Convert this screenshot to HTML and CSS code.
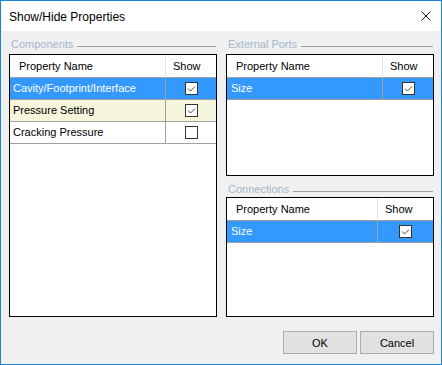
FILE: index.html
```
<!DOCTYPE html>
<html>
<head>
<meta charset="utf-8">
<link rel="stylesheet" href="styles.css">
</head>
<body>
<div class="window">
  <div class="titlebar">
    <span class="title">Show/Hide Properties</span>
    <svg class="close" width="10" height="10" viewBox="0 0 10 10"><path d="M0.5 0.5 L9.5 9.5 M9.5 0.5 L0.5 9.5" stroke="#111" stroke-width="1" fill="none"/></svg>
  </div>
  <div class="body">
    <div class="columns">
      <div class="col">
        <div class="group-label"><span>Components</span><div class="rule"></div></div>
        <div class="grid grid-components">
          <div class="row head"><div class="cell name">Property Name</div><div class="cell show">Show</div></div>
          <div class="row selected"><div class="cell name">Cavity/Footprint/Interface</div><div class="cell check"><svg width="13" height="13" viewBox="0 0 13 13"><rect x="0.5" y="0.5" width="12" height="12" fill="#fff" stroke="#333"/><path d="M3 6.5 L5.5 9 L10 4.5" stroke="#444" stroke-width="1" fill="none"/></svg></div></div>
          <div class="row current"><div class="cell name">Pressure Setting</div><div class="cell check"><svg width="13" height="13" viewBox="0 0 13 13"><rect x="0.5" y="0.5" width="12" height="12" fill="#fff" stroke="#333"/><path d="M3 6.5 L5.5 9 L10 4.5" stroke="#444" stroke-width="1" fill="none"/></svg></div></div>
          <div class="row"><div class="cell name">Cracking Pressure</div><div class="cell check"><svg width="13" height="13" viewBox="0 0 13 13"><rect x="0.5" y="0.5" width="12" height="12" fill="#fff" stroke="#333"/></svg></div></div>
        </div>
      </div>
      <div class="col">
        <div class="group-label"><span>External Ports</span><div class="rule"></div></div>
        <div class="grid grid-ports">
          <div class="row head"><div class="cell name">Property Name</div><div class="cell show">Show</div></div>
          <div class="row selected"><div class="cell name">Size</div><div class="cell check"><svg width="13" height="13" viewBox="0 0 13 13"><rect x="0.5" y="0.5" width="12" height="12" fill="#fff" stroke="#333"/><path d="M3 6.5 L5.5 9 L10 4.5" stroke="#444" stroke-width="1" fill="none"/></svg></div></div>
        </div>
        <div class="group-label second"><span>Connections</span><div class="rule"></div></div>
        <div class="grid grid-connections">
          <div class="row head"><div class="cell name">Property Name</div><div class="cell show">Show</div></div>
          <div class="row selected"><div class="cell name">Size</div><div class="cell check"><svg width="13" height="13" viewBox="0 0 13 13"><rect x="0.5" y="0.5" width="12" height="12" fill="#fff" stroke="#333"/><path d="M3 6.5 L5.5 9 L10 4.5" stroke="#444" stroke-width="1" fill="none"/></svg></div></div>
        </div>
      </div>
    </div>
    <div class="buttons">
      <div class="btn">OK</div>
      <div class="btn">Cancel</div>
    </div>
  </div>
</div>
</body>
</html>
```
FILE: styles.css
```
* { box-sizing: border-box; }
html, body { margin: 0; padding: 0; }
body {
  font-family: "Liberation Sans", Arial, sans-serif;
  font-size: 11px;
  color: #000;
  background: #fff;
}
.window {
  width: 442px;
  height: 365px;
  border: 1px solid #1883d7;
  display: flex;
  flex-direction: column;
  background: #f0f0f0;
}
.titlebar {
  height: 30px;
  background: #fff;
  display: flex;
  align-items: center;
  justify-content: space-between;
  padding: 0 10px 0 8px;
  flex: none;
}
.title { font-size: 12px; line-height: 14px; margin-top: 1px; }
.close { display: block; }
.body {
  flex: 1;
  padding: 6px 7px 0 8px;
  display: flex;
  flex-direction: column;
}
.columns {
  display: grid;
  grid-template-columns: 208px 208px;
  column-gap: 9px;
}
.col { display: flex; flex-direction: column; }
.group-label {
  display: flex;
  align-items: flex-start;
  height: 14px;
  line-height: 14px;
  margin-bottom: 3px;
  color: #a3b8cf;
  padding-left: 2px;
}
.group-label.second { margin-top: 6px; margin-bottom: 1px; }
.group-label .rule {
  flex: 1;
  height: 1px;
  background: #a0a0a0;
  margin: 9px 1px 0 4px;
}
.grid {
  border: 1px solid #000;
  background: #fff;
  display: flex;
  flex-direction: column;
}
.grid-components { height: 263px; }
.grid-ports { height: 122px; }
.grid-connections { height: 120px; }
.row {
  display: grid;
  grid-template-columns: 1fr 51px;
  height: 22px;
  border-bottom: 1px solid #a0a0a0;
  line-height: 21px;
}
.grid-connections .row { grid-template-columns: 1fr 56px; }
.row.head {
  height: 23px;
  line-height: 22px;
  background: #fff;
}
.cell { white-space: nowrap; overflow: hidden; }
.row .name { padding-left: 3px; }
.grid-ports .row .name, .grid-connections .row .name { padding-left: 4px; }
.row.head .name { padding-left: 9px; }
.row .show, .row .check { border-left: 1px solid #a0a0a0; }
.row.head .show { border-left: 1px solid #e5e5e5; padding-left: 7px; }
.row .check {
  display: flex;
  align-items: center;
  justify-content: center;
}
.row .check svg { display: block; }
.row.selected { background: #3399ff; color: #fff; }
.row.current { background: #f5f5dc; }
.buttons {
  display: flex;
  justify-content: flex-end;
  gap: 3px;
  margin-top: 14px;
}
.btn {
  width: 74px;
  height: 23px;
  background: #e1e1e1;
  border: 1px solid #adadad;
  display: flex;
  align-items: center;
  justify-content: center;
  font-size: 11px;
}
```
